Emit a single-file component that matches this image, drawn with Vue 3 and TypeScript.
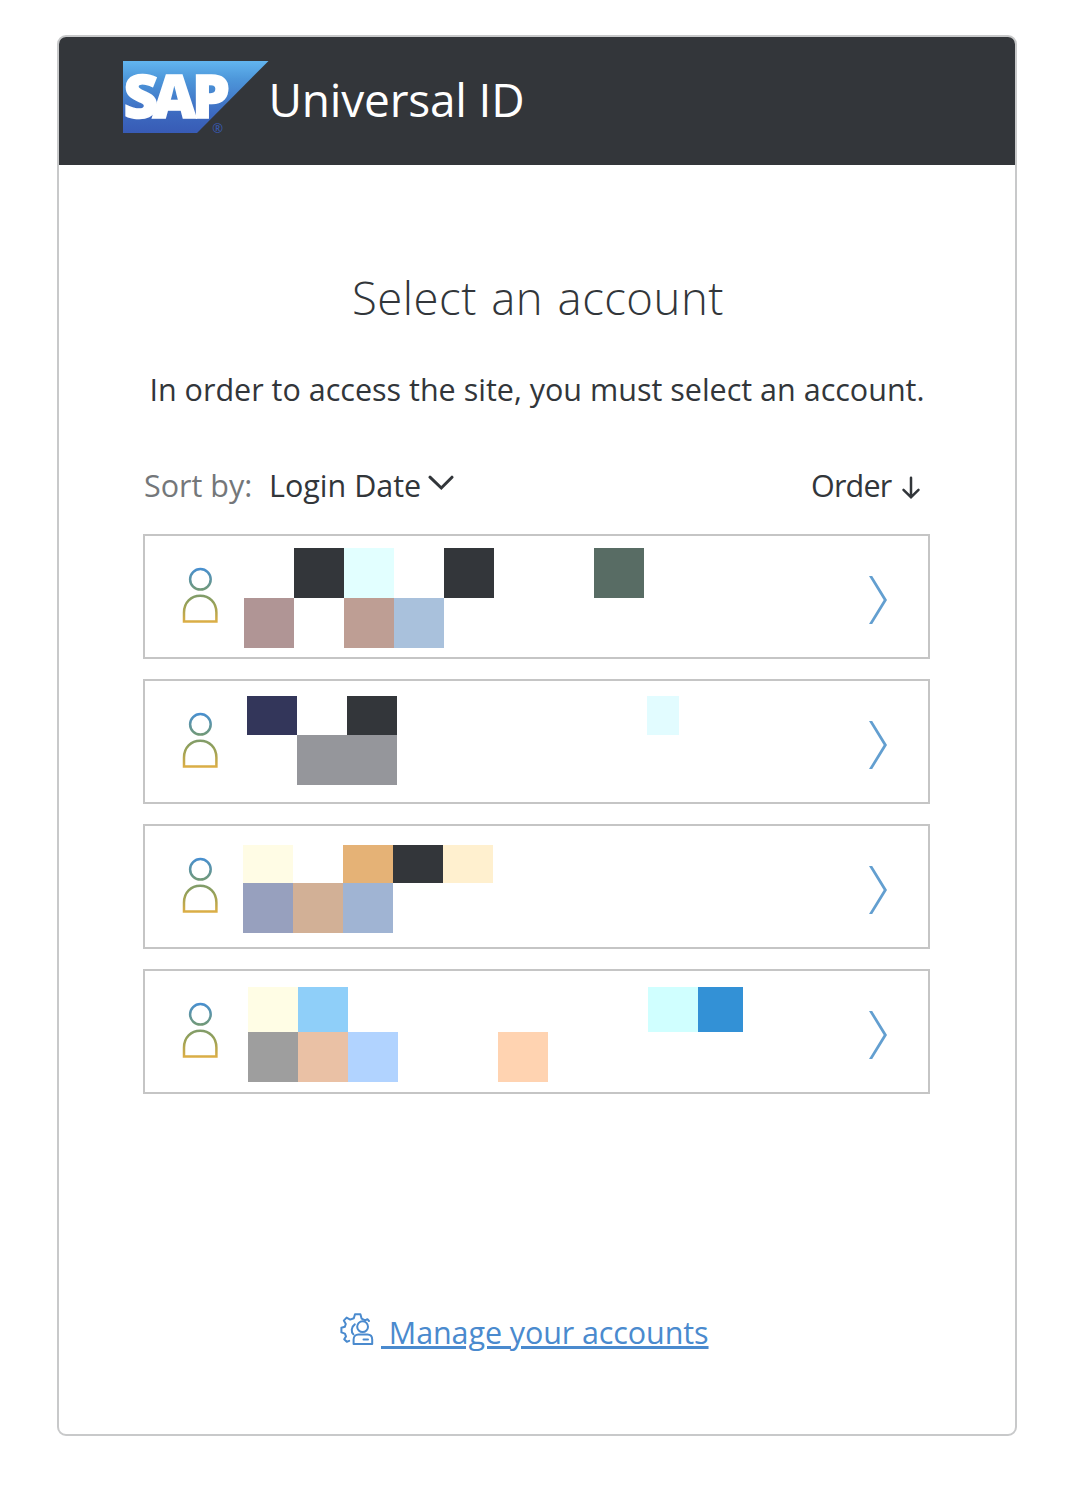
<script setup lang="ts">
interface Block {
  x: number
  y: number
  w: number
  h: number
  fill: string
}

interface Account {
  id: number
  blocks: Block[]
}

const block = (x: number, y: number, w: number, h: number, fill: string): Block => ({ x, y, w, h, fill })

// Each account's details are masked by coloured blocks.
const accounts: Account[] = [
  {
    id: 1,
    blocks: [
      block(149, 12, 50, 50, '#33363a'),
      block(199, 12, 50, 50, '#e2ffff'),
      block(299, 12, 50, 50, '#33363a'),
      block(449, 12, 50, 50, '#586c64'),
      block(99, 62, 50, 50, '#b09595'),
      block(199, 62, 50, 50, '#be9e94'),
      block(249, 62, 50, 50, '#a9c1dc'),
    ],
  },
  {
    id: 2,
    blocks: [
      block(102, 15, 50, 39, '#33365a'),
      block(202, 15, 50, 39, '#33363a'),
      block(502, 15, 32, 39, '#e2fcff'),
      block(152, 54, 100, 50, '#95969b'),
    ],
  },
  {
    id: 3,
    blocks: [
      block(98, 19, 50, 38, '#fffce5'),
      block(198, 19, 50, 38, '#e5b276'),
      block(248, 19, 50, 38, '#33363a'),
      block(298, 19, 50, 38, '#fff0cf'),
      block(98, 57, 50, 50, '#97a0be'),
      block(148, 57, 50, 50, '#d2b096'),
      block(198, 57, 50, 50, '#a0b4d3'),
    ],
  },
  {
    id: 4,
    blocks: [
      block(103, 16, 50, 45, '#fffde5'),
      block(153, 16, 50, 45, '#8fcff9'),
      block(503, 16, 50, 45, '#d0ffff'),
      block(553, 16, 45, 45, '#3391d6'),
      block(103, 61, 50, 50, '#9e9e9e'),
      block(153, 61, 50, 50, '#eac1a5'),
      block(203, 61, 50, 50, '#b1d3ff'),
      block(353, 61, 50, 50, '#ffd3b1'),
    ],
  },
]
</script>

<template>
  <main class="card">
    <header class="bar">
      <svg class="logo" width="146" height="74" viewBox="0 0 146 74">
        <defs>
          <linearGradient id="logo-fill" x1="0" y1="0" x2="0" y2="1">
            <stop offset="0" stop-color="#62b5ef" />
            <stop offset="0.25" stop-color="#4d97da" />
            <stop offset="0.75" stop-color="#3c68bf" />
            <stop offset="1" stop-color="#385bb5" />
          </linearGradient>
        </defs>
        <path d="M0 0H145.5L74 72H0Z" fill="url(#logo-fill)" />
        <text class="logo-text" x="0.5 29.5 69" y="57" fill="#fff" stroke="#fff">SAP</text>
        <text class="logo-mark" x="89.3" y="72" fill="#385bb5">®</text>
      </svg>
      <span class="brand">Universal ID</span>
    </header>

    <section class="body">
      <h1>Select an account</h1>
      <p class="intro">In order to access the site, you must select an account.</p>

      <div class="tools">
        <span class="sort-label">Sort by:</span>
        <span class="sort-value">Login Date</span>
        <svg class="caret" width="26" height="16" viewBox="0 0 26 16">
          <path d="M2 2.2L13.3 13L24 2.2" fill="none" stroke="#32363a" stroke-width="3" stroke-linecap="round" />
        </svg>
        <span class="order">Order</span>
        <svg class="arrow" width="20" height="24" viewBox="0 0 20 24">
          <path d="M10 1.8V21M2.5 13.8L10 21.2L17.5 13.8" fill="none" stroke="#32363a" stroke-width="2.5" stroke-linecap="round" />
        </svg>
      </div>

      <ul class="accounts">
        <li v-for="account in accounts" :key="account.id" class="account">
          <svg width="783" height="121" viewBox="0 0 783 121">
            <defs>
              <linearGradient :id="`person-${account.id}`" gradientUnits="userSpaceOnUse" x1="0" y1="32" x2="0" y2="86">
                <stop offset="0" stop-color="#478fd2" />
                <stop offset="0.4" stop-color="#719978" />
                <stop offset="0.65" stop-color="#94a058" />
                <stop offset="1" stop-color="#dcae45" />
              </linearGradient>
            </defs>
            <g fill="none" :stroke="`url(#person-${account.id})`" stroke-width="2.5">
              <circle cx="55.4" cy="43.3" r="10.3" />
              <path d="M39 85.5V76.5C39 66.5 46 59.7 55.2 59.7S71.4 66.5 71.4 76.5V85.5Z" />
            </g>
            <rect
              v-for="(b, i) in account.blocks"
              :key="i"
              :x="b.x"
              :y="b.y"
              :width="b.w"
              :height="b.h"
              :fill="b.fill"
              shape-rendering="crispEdges"
            />
            <path d="M724 40H727.2L742 64L727.2 88H724L738.7 64Z" fill="#639fd0" />
          </svg>
        </li>
      </ul>

      <a class="manage">
        <svg width="34" height="34" viewBox="0 0 34 34">
          <g fill="none" stroke="#4a8ace" stroke-width="2" stroke-linejoin="round" stroke-linecap="round">
            <path d="M29 9L27.4 7.2L25.2 8.4L21.6 6.6L20.4 2.2H15L13.8 6.2L10.2 7.6L6.6 5.6L3.8 8.6L5.8 12L4.8 14.8L1.4 15.8V20.4L4.9 21.6L6 24.4L4.2 27.2L6.8 29.8L9.2 28.8" />
            <path d="M14.8 12.4C11 15 11 20 13.4 22.4" />
            <circle cx="22.6" cy="14.7" r="5.4" />
            <path d="M13.6 32V27.6C13.6 24.2 16 22.4 18.4 22.4H27.5C30.4 22.4 32.2 24.4 32.2 27.4V32Z" />
            <path d="M23.5 27.4H28" />
          </g>
        </svg>
        <span class="manage-text">&nbsp;Manage your accounts</span>
      </a>
    </section>
  </main>
</template>

<style>
body {
  background: #fff;
}
</style>

<style scoped>
.card {
  box-sizing: border-box;
  width: 960px;
  height: 1401px;
  margin: 35px 0 0 57px;
  border: 2px solid #c8c9ca;
  border-radius: 9px;
  overflow: hidden;
  font-family: "Open Sans", "Noto Sans", sans-serif;
  color: #32363a;
  white-space: nowrap;
}

.bar {
  display: flex;
  height: 128px;
  background: #33363a;
}

.logo {
  flex: none;
  margin: 24px 0 0 64px;
  overflow: visible;
}

.logo-text {
  font-size: 60px;
  font-weight: 800;
  stroke-width: 1.5px;
}

.logo-mark {
  font-size: 13px;
}

.brand {
  margin: 30px 0 0 -0.5px;
  color: #fff;
  font-size: 46px;
  font-weight: 450;
  line-height: 64px;
  letter-spacing: -0.2px;
}

.body {
  display: flex;
  flex-direction: column;
  padding: 0 85px 0 84px;
}

h1 {
  margin: 100px 0 0 3px;
  text-align: center;
  font-size: 45.5px;
  font-weight: 320;
  line-height: 64px;
  letter-spacing: 0.5px;
  word-spacing: 2px;
}

.intro {
  margin: 39px 0 0 1px;
  text-align: center;
  font-size: 30.5px;
  line-height: 42px;
}

.tools {
  display: flex;
  height: 42px;
  margin-top: 54px;
  font-size: 30.5px;
  line-height: 42px;
}

.sort-label {
  width: 125px;
  padding-left: 1px;
  color: #74777a;
}

.sort-value {
  width: 159px;
}

.caret {
  margin-top: 11px;
}

.order {
  width: 90px;
  margin-left: auto;
  letter-spacing: -0.8px;
}

.arrow {
  margin: 12px 9px 0 0;
}

.accounts {
  display: flex;
  flex-direction: column;
  gap: 20px;
  margin: 28px 0 0;
  padding: 0;
  list-style: none;
}

.account {
  box-sizing: border-box;
  height: 125px;
  border: 2px solid #c5c5c5;
}

.account svg {
  display: block;
}

.manage {
  display: flex;
  margin: 217px 0 0 197px;
  color: #4a8ace;
  font-size: 30.5px;
  line-height: 42px;
}

.manage svg {
  margin-top: 1px;
}

.manage-text {
  margin-left: 7px;
  letter-spacing: -0.1px;
  text-decoration: underline;
  text-decoration-thickness: 3px;
  text-underline-offset: 2px;
}
</style>
